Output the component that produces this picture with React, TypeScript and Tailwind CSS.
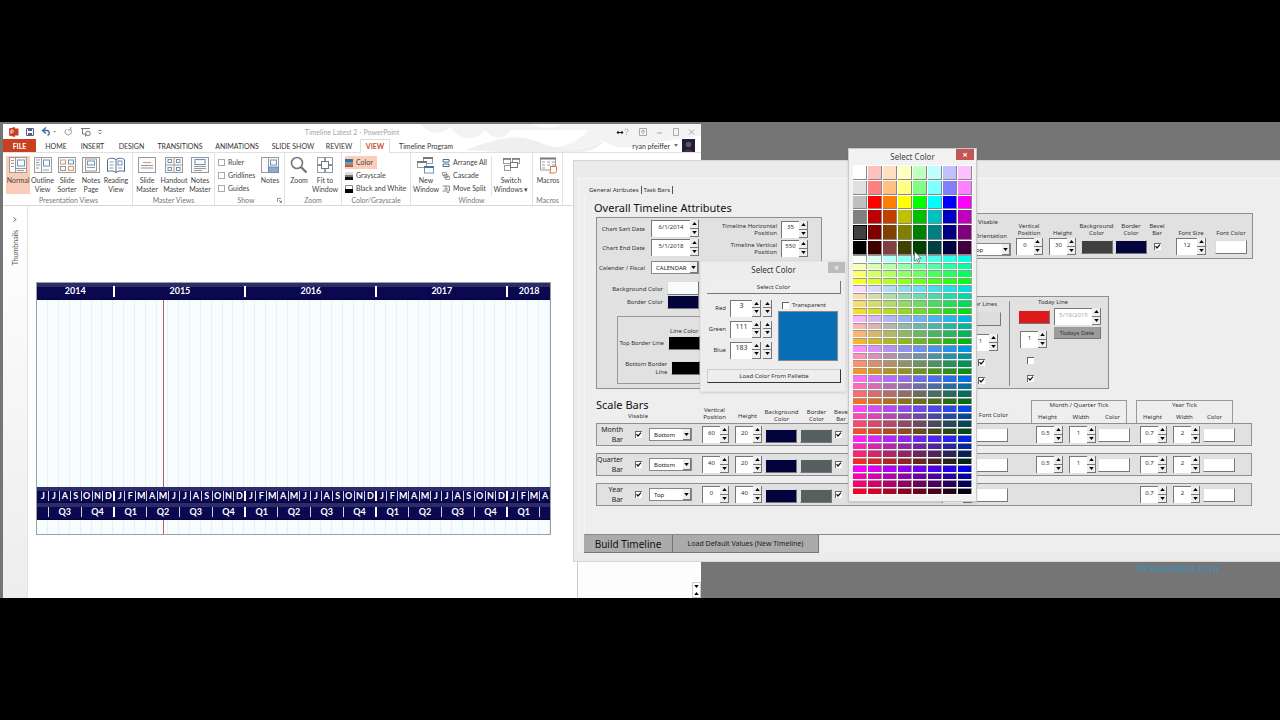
import type { ReactNode } from "react";
import clsx from "clsx";

const YEARS = [
  { label: "2014", span: "col-span-7" },
  { label: "2015", span: "col-span-12" },
  { label: "2016", span: "col-span-12" },
  { label: "2017", span: "col-span-12" },
  { label: "2018", span: "col-span-4" },
];
const MONTHS = "JJASOND" + "JFMAMJJASOND".repeat(3) + "JFMA";
const QUARTERS = ["", "Q3", "Q4", "Q1", "Q2", "Q3", "Q4", "Q1", "Q2", "Q3", "Q4", "Q1", "Q2", "Q3", "Q4", "Q1", ""];

const BASIC_COLORS = [
  "#ffffff #ffc0c0 #ffe0c0 #ffffc0 #c0ffc0 #c0ffff #c0c0ff #ffc0ff",
  "#e0e0e0 #ff8080 #ffc080 #ffff80 #80ff80 #80ffff #8080ff #ff80ff",
  "#c0c0c0 #ff0000 #ff8000 #ffff00 #00ff00 #00ffff #0000ff #ff00ff",
  "#808080 #c00000 #c04000 #c0c000 #00c000 #00c0c0 #0000c0 #c000c0",
  "#404040 #800000 #804000 #808000 #008000 #008080 #000080 #800080",
  "#000000 #400000 #804040 #404000 #004000 #004040 #000040 #400040",
].flatMap((row) => row.split(" "));

// 8 green levels x 4 blue levels down, 8 red levels across
const MIXED_COLORS = Array.from({ length: 256 }, (_, i) => {
  const row = Math.floor(i / 8);
  const r = Math.round(250 - (i % 8) * 35);
  const g = Math.round(255 - Math.floor(row / 4) * 36.4);
  const b = 250 - (row % 4) * 70;
  return `rgb(${Math.max(r, 0)}, ${Math.max(g, 0)}, ${b - (i % 8) * 3})`;
});

/* ---------- form controls ---------- */

function Arrow({ up = false }: { up?: boolean }) {
  return (
    <svg viewBox="0 0 6 4" className="h-[3px] w-[5px]" aria-hidden="true">
      <path d={up ? "M3 0 6 4H0z" : "M0 0h6L3 4z"} fill="#000" />
    </svg>
  );
}

function SpinButtons({ name }: { name: string }) {
  const cls =
    "flex flex-1 items-center justify-center border-r border-b border-[#777] bg-[#eee]";
  return (
    <span className="flex w-[9px] shrink-0 flex-col">
      <button type="button" aria-label={`${name} up`} className={cls}>
        <Arrow up />
      </button>
      <button type="button" aria-label={`${name} down`} className={cls}>
        <Arrow />
      </button>
    </span>
  );
}

function Spin({
  name,
  id,
  value,
  width = "w-[27px]",
  tone = "text-[#333]",
  big = false,
}: {
  name: string;
  id?: string;
  value: string;
  width?: string;
  tone?: string;
  big?: boolean;
}) {
  return (
    <span className={clsx("flex h-[17px]", width)}>
      <input
        id={id}
        aria-label={id ? undefined : name}
        defaultValue={value}
        className={clsx(
          "min-w-0 flex-1 border-t border-l border-[#777] bg-white pb-[5px] text-center",
          big ? "text-[7px]" : "text-[6px]",
          tone,
        )}
      />
      <SpinButtons name={name} />
    </span>
  );
}

function Combo({ name, id, value, width }: { name: string; id?: string; value: string; width: string }) {
  return (
    <span className={clsx("grid h-[13px] items-center", width)}>
      <select
        id={id}
        aria-label={id ? undefined : name}
        className="col-start-1 row-start-1 h-full w-full appearance-none border border-[#888] bg-white pl-1 text-[6px] leading-[10px] text-[#222]"
      >
        <option>{value}</option>
      </select>
      <span className="pointer-events-none col-start-1 row-start-1 mr-px flex h-[11px] w-2 items-center justify-center justify-self-end border-r border-b border-[#777] bg-[#eee]">
        <Arrow />
      </span>
    </span>
  );
}

function Check({ name, id, checked = false }: { name: string; id?: string; checked?: boolean }) {
  return (
    <span className="grid size-[7px] place-items-center">
      <input
        type="checkbox"
        id={id}
        aria-label={id ? undefined : name}
        defaultChecked={checked}
        className="peer col-start-1 row-start-1 size-[7px] appearance-none border-t border-l border-[#666] bg-white"
      />
      <svg
        viewBox="0 0 7 7"
        className="pointer-events-none col-start-1 row-start-1 hidden size-[7px] peer-checked:block"
        aria-hidden="true"
      >
        <path d="M1.5 3.2 3 5 6 1.6" fill="none" stroke="#111" strokeWidth="1.2" />
      </svg>
    </span>
  );
}

function Swatch({ name, color, width = "w-8" }: { name: string; color: string; width?: string }) {
  return (
    <button
      type="button"
      aria-label={name}
      className={clsx("block h-[14px] border-t border-l border-r border-b border-t-[#ddd] border-l-[#ddd] border-r-[#777] border-b-[#777]", width, color)}
    />
  );
}

function Stack({ label, width, children }: { label: string; width: string; children: ReactNode }) {
  return (
    <div className={clsx("flex shrink-0 flex-col items-center justify-end text-center", width)}>
      <span className="leading-[7px]">{label}</span>
      <div className="flex h-[19px] items-center">{children}</div>
    </div>
  );
}

/* ---------- PowerPoint window ---------- */

function PageIcon({ kind }: { kind: string }) {
  return (
    <svg viewBox="0 0 20 18" className="h-[18px] w-5" fill="none" stroke="#9a9a9a" aria-hidden="true">
      {kind !== "zoom" && kind !== "windows" && kind !== "switch" && kind !== "fit" && kind !== "reading" && kind !== "macros" && (
        <rect x="1.5" y="1.5" width="17" height="15" fill="#fafafa" />
      )}
      {kind === "normal" && (
        <>
          <path d="M7.500 1.500v15M7.500 12.500h11M3 4.500h3M3 7.500h3M3 10.500h3M9 14.500h7" />
          <rect x="9.500" y="4" width="7" height="6" stroke="#6f93b8" />
        </>
      )}
      {kind === "outline" && (
        <>
          <path d="M8.500 1.500v15M3 4h4M3 6.500h3M3 9h4M3 12h3M10 14h6" />
          <rect x="10.500" y="4" width="6" height="6" stroke="#6f93b8" />
        </>
      )}
      {kind === "sorter" && (
        <>
          <rect x="3.500" y="4" width="5" height="4" stroke="#d69a75" />
          <rect x="11.500" y="4" width="5" height="4" stroke="#6f93b8" />
          <rect x="3.500" y="10.500" width="5" height="4" />
          <rect x="11.500" y="10.500" width="5" height="4" stroke="#d69a75" />
        </>
      )}
      {kind === "notes" && (
        <>
          <rect x="4.500" y="3" width="11" height="12" />
          <rect x="6.500" y="5" width="7" height="4" stroke="#6f93b8" />
          <path d="M6 11.500h8" />
        </>
      )}
      {kind === "reading" && (
        <>
          <path d="M1.500 3.500c3-2 6-1.500 8.500 0 2.500-1.500 5.500-2 8.500 0v12c-3-1-6-1-8.500 1-2.500-2-5.500-2-8.500-1z" fill="#fff" stroke="#4d7093" />
          <path d="M10 3.500v13" stroke="#4d7093" />
          <path d="M3.500 6h4M3.500 9h4M3.500 12h4M12 12h4" />
          <rect x="12" y="5" width="4" height="4" stroke="#6f93b8" />
        </>
      )}
      {kind === "slideMaster" && (
        <>
          <path d="M6 6.500h8" stroke="#d69a75" />
          <path d="M4 9.500h12M4 12h12" />
        </>
      )}
      {kind === "handout" && (
        <>
          <path d="M10 1.500v15M1.500 9h17" />
          <rect x="4" y="3.500" width="3.500" height="3" stroke="#6f93b8" />
          <rect x="12.500" y="3.500" width="3.500" height="3" stroke="#6f93b8" />
          <rect x="4" y="11.500" width="3.500" height="3" stroke="#6f93b8" />
          <rect x="12.500" y="11.500" width="3.500" height="3" stroke="#6f93b8" />
        </>
      )}
      {kind === "notesMaster" && (
        <>
          <rect x="5" y="3.500" width="10" height="5" stroke="#6f93b8" />
          <path d="M4 10.500h12M4 12.500h12M4 14.500h8" />
        </>
      )}
      {kind === "notesPane" && (
        <>
          <path d="M8.500 1.500v15" />
          <rect x="10.500" y="4" width="6" height="5" stroke="#6f93b8" />
          <rect x="8.500" y="11" width="10" height="5.500" fill="#8ea9cf" stroke="#6d8bb8" />
        </>
      )}
      {kind === "zoom" && (
        <>
          <circle cx="8" cy="7" r="5.500" stroke="#777" strokeWidth="1.600" />
          <path d="m12 11 5.500 5.500" stroke="#777" strokeWidth="2.400" />
        </>
      )}
      {kind === "fit" && (
        <>
          <rect x="2.500" y="1.500" width="15" height="15" fill="#fff" />
          <rect x="6.500" y="5.500" width="7" height="7" stroke="#777" />
          <path d="M10 2v3M10 13v3M3 9h3M14 9h3" stroke="#4d7093" strokeWidth="1.400" />
        </>
      )}
      {kind === "windows" && (
        <>
          <rect x="7.500" y="1.500" width="9" height="6" fill="#fff" />
          <path d="M7 2h10" stroke="#777" strokeWidth="2" />
          <rect x="1.500" y="5.500" width="9" height="6" fill="#fff" />
          <path d="M1 6h10" stroke="#777" strokeWidth="2" />
          <rect x="8.500" y="10.500" width="9" height="6.500" fill="#fff" stroke="#6f93b8" />
          <path d="M8 11h10" stroke="#3f74b0" strokeWidth="2" />
        </>
      )}
      {kind === "switch" && (
        <>
          <rect x="2.500" y="2.500" width="7" height="5" fill="#fff" />
          <rect x="11.500" y="2.500" width="7" height="5" fill="#fff" />
          <rect x="3.500" y="9.500" width="6" height="5" fill="#fff" />
          <rect x="9.500" y="6.500" width="7" height="5" fill="#fff" stroke="#777" />
          <path d="M2 3h8M11 3h8" stroke="#777" strokeWidth="1.500" />
        </>
      )}
      {kind === "macros" && (
        <>
          <path d="M2.500 2v12h10M17.500 2v8" fill="none" />
          <path d="M2 2.500h16" stroke="#777" strokeWidth="2" />
          <path d="M4 6h3M9 6h3M14 6h3M4 9h3M9 9h3M14 9h3M4 12h3" />
          <path d="M12.500 10.500h6v4c0 2-1 2.500-2 2.500h-5c1-1 1-2 1-3z" fill="#fff" stroke="#d9703c" />
        </>
      )}
    </svg>
  );
}

function RibbonButton({
  icon,
  label,
  width,
  active = false,
}: {
  icon: string;
  label: ReactNode;
  width: string;
  active?: boolean;
}) {
  return (
    <button
      type="button"
      className={clsx(
        "flex h-[38px] shrink-0 flex-col items-center gap-0.5 text-center leading-[9px]",
        width,
        active && "bg-[#fbcdb8]",
      )}
    >
      <PageIcon kind={icon} />
      <span>{label}</span>
    </button>
  );
}

function RibbonGroup({
  title,
  width,
  launcher = false,
  children,
}: {
  title: string;
  width: string;
  launcher?: boolean;
  children: ReactNode;
}) {
  return (
    <section className={clsx("flex shrink-0 flex-col border-r border-[#e2e2e2] pt-[3px]", width)}>
      <div className="flex flex-1 px-px">{children}</div>
      <h3 className="flex h-[9px] items-center justify-center text-[7px] leading-[9px] text-[#777]">
        <span className="flex-1">{title}</span>
        {launcher && (
          <svg viewBox="0 0 5 5" className="mr-0.5 size-[5px]" fill="none" stroke="#777" aria-hidden="true">
            <path d="M.5 4V.5H4M2 2l2.500 2.500M4.500 2.500v2h-2" strokeWidth=".8" />
          </svg>
        )}
      </h3>
    </section>
  );
}

function MiniItem({ icon, label, active = false }: { icon: ReactNode; label: string; active?: boolean }) {
  return (
    <button
      type="button"
      className={clsx("flex h-[13px] items-center gap-[3px] pr-1 whitespace-nowrap", active && "bg-[#fbcdb8]")}
    >
      <svg viewBox="0 0 8 8" className="size-2" fill="none" aria-hidden="true">
        {icon}
      </svg>
      {label}
    </button>
  );
}

function TitleBar() {
  return (
    <header className="relative grid h-[15px] grid-cols-[1fr_auto_1fr] items-center px-[5px]">
      <svg viewBox="0 0 300 30" className="absolute top-0 right-0 h-[30px] w-[300px]" aria-hidden="true">
        <path
          d="M20 0c8 12 22 10 30 3 6 14 28 14 34 3 8 10 20 10 26 0h78c-8 8-20 18-44 18 24 4 46 0 58-8 8 8 26 10 40 4l58-8V0z"
          fill="#f3f3f3"
        />
        <path d="M64 26c28-10 50-18 74-8s44 10 66-2c-8 12-26 14-44 12-30 2-62 0-96-2z" fill="#efefef" />
        <path d="M130 0c10 4 18 6 32 0z" fill="#fff" />
      </svg>
      <div className="relative flex items-center">
        <svg viewBox="0 0 100 12" className="h-3 w-[100px]" fill="none" aria-hidden="true">
          <path d="M1 2.500 7 1v10L1 9.500zM7 2.500h3.500v7H7" fill="#c8401f" />
          <path d="M3 8V4h1.200a1.200 1.200 0 0 1 0 2.400H3" stroke="#fff" strokeWidth=".8" />
          <path d="M18.500 2.500h7v7h-7z" stroke="#5d5a86" />
          <path d="M20 2.500h4v2.500h-4zM20 7h4v2.500h-4z" fill="#5d5a86" />
          <path d="M35 4.500h4.500a2.500 2.500 0 0 1 0 4.800" stroke="#41719c" strokeWidth="1.400" />
          <path d="M38 1.500 34.500 4.500 38 7.500" stroke="#41719c" strokeWidth="1.400" />
          <path d="m45.500 5 1.200 1.500L48 5z" fill="#777" />
          <path d="M62.500 3.500a3.200 3.200 0 1 1-4.500 0M62.800 1v3h-3" stroke="#999" />
          <path d="M73 2.500h9M74.500 3v5h3M77.500 8v2.500" stroke="#777" />
          <circle cx="80" cy="7.500" r="2.300" stroke="#777" />
          <path d="M90.500 4.500h3M90.700 6.500 92 8l1.300-1.500" stroke="#777" />
        </svg>
      </div>
      <h1 className="relative text-[7px] leading-[10px] text-[#a6a6a6]">Timeline Latest 2 - PowerPoint</h1>
      <div className="relative flex justify-end">
        <svg viewBox="0 0 84 12" className="h-3 w-[84px]" fill="none" stroke="#aaa" aria-hidden="true">
          <path d="M5 6.500h6" stroke="#111" />
          <path d="M6.500 4.500v4l-2-2zM9.500 4.500v4l2-2z" fill="#111" stroke="none" />
          <path d="M13 4.500c0-2 3-2 3 0 0 1-1.500 1-1.500 2.500M14.500 8v1" />
          <path d="M27.500 2.500h7v7h-7zM29 6l2-2 2 2M31 4v4" />
          <path d="M45 7h5" />
          <path d="M61.500 2.500h5v7h-5z" />
          <path d="m77 3.500 5 5M82 3.500l-5 5" />
        </svg>
      </div>
    </header>
  );
}

const TABS = [
  { label: "HOME", width: "w-[40px]" },
  { label: "INSERT", width: "w-[33px]" },
  { label: "DESIGN", width: "w-[45px]" },
  { label: "TRANSITIONS", width: "w-[52px]" },
  { label: "ANIMATIONS", width: "w-[62px]" },
  { label: "SLIDE SHOW", width: "w-[50px]" },
  { label: "REVIEW", width: "w-[42px]" },
];

function TabBar() {
  return (
    <nav className="relative flex h-[14px] items-stretch border-b border-[#e0e0e0] text-[7px] leading-[14px] text-[#333]">
      <button type="button" className="w-[33px] bg-[#c8401f] font-bold text-white">
        FILE
      </button>
      {TABS.map((tab) => (
        <button key={tab.label} type="button" className={clsx("shrink-0 text-center", tab.width)}>
          {tab.label}
        </button>
      ))}
      <button type="button" className="-mb-px w-[30px] border border-b-0 border-[#ddd] bg-white leading-[13px] font-bold text-[#c8502f]">
        VIEW
      </button>
      <button type="button" className="w-[72px]">
        Timeline Program
      </button>
      <div className="ml-auto flex items-center gap-1 pr-1.5">
        <span>ryan pfeiffer</span>
        <svg viewBox="0 0 4 3" className="h-[3px] w-1" aria-hidden="true">
          <path d="M0 0h4L2 3z" fill="#777" />
        </svg>
        <svg viewBox="0 0 14 14" className="size-[13px]" aria-hidden="true">
          <path d="M0 0h14v14H0z" fill="#251c38" />
          <circle cx="7" cy="6" r="3" fill="#6b5069" />
          <path d="M2 14c1-4 9-4 10 0z" fill="#403052" />
        </svg>
      </div>
    </nav>
  );
}

function Ribbon() {
  return (
    <div className="flex h-[53px] border-b border-[#d8d8d8] bg-white text-center text-[7px] text-[#444]">
      <RibbonGroup title="Presentation Views" width="w-[130px] pl-0.5">
        <RibbonButton icon="normal" label="Normal" width="w-6" active />
        <RibbonButton icon="outline" label={<>Outline<br />View</>} width="w-[25px]" />
        <RibbonButton icon="sorter" label={<>Slide<br />Sorter</>} width="w-6" />
        <RibbonButton icon="notes" label={<>Notes<br />Page</>} width="w-6" />
        <RibbonButton icon="reading" label={<>Reading<br />View</>} width="w-[26px]" />
      </RibbonGroup>
      <RibbonGroup title="Master Views" width="w-[82px]">
        <RibbonButton icon="slideMaster" label={<>Slide<br />Master</>} width="w-[26px]" />
        <RibbonButton icon="handout" label={<>Handout<br />Master</>} width="w-7" />
        <RibbonButton icon="notesMaster" label={<>Notes<br />Master</>} width="w-6" />
      </RibbonGroup>
      <RibbonGroup title="Show" width="w-[70px]" launcher>
        <div className="flex w-[41px] shrink-0 flex-col pl-0.5">
          {["Ruler", "Gridlines", "Guides"].map((label) => (
            <label key={label} className="flex h-[13px] items-center gap-[3px]">
              <input type="checkbox" className="size-[7px] appearance-none border border-[#aaa] bg-white" />
              {label}
            </label>
          ))}
        </div>
        <RibbonButton icon="notesPane" label="Notes" width="w-[26px]" />
      </RibbonGroup>
      <RibbonGroup title="Zoom" width="w-[57px]">
        <RibbonButton icon="zoom" label="Zoom" width="w-[26px]" />
        <RibbonButton icon="fit" label={<>Fit to<br />Window</>} width="w-[26px]" />
      </RibbonGroup>
      <RibbonGroup title="Color/Grayscale" width="w-[69px]">
        <div className="flex flex-col items-start pl-0.5">
          <MiniItem
            active
            label="Color"
            icon={<><path d="M0 0h8v3H0z" fill="#3c6f9e" /><path d="M0 3h8v3H0z" fill="#7b9c96" /><path d="M0 6h8v2H0z" fill="#c25a3a" /></>}
          />
          <MiniItem
            label="Grayscale"
            icon={<><path d="M0 0h8v3H0z" fill="#ddd" /><path d="M0 3h8v2H0z" fill="#777" /><path d="M0 5h8v3H0z" fill="#111" /></>}
          />
          <MiniItem
            label="Black and White"
            icon={<><path d="M.5.500h7v7h-7z" fill="#fff" stroke="#888" /><path d="M0 4h8v4H0z" fill="#000" /></>}
          />
        </div>
      </RibbonGroup>
      <RibbonGroup title="Window" width="w-[122px]">
        <RibbonButton icon="windows" label={<>New<br />Window</>} width="w-7" />
        <div className="flex w-[52px] shrink-0 flex-col items-start border-r border-[#e2e2e2] pl-0.5">
          <MiniItem label="Arrange All" icon={<path d="M1 .5h6v2.500H1zM1 5h6v2.500H1z" stroke="#41719c" />} />
          <MiniItem label="Cascade" icon={<path d="M.5.500h4v3h-4zM2 2.500h4v3H2zM3.500 4.500h4v3h-4z" fill="#fff" stroke="#888" strokeWidth=".8" />} />
          <MiniItem label="Move Split" icon={<path d="M.5 1h7v5h-7M4 1v3M2 4h4M5 7.500h2" stroke="#888" />} />
        </div>
        <RibbonButton icon="switch" label={<>Switch<br />Windows ▾</>} width="w-[38px]" />
      </RibbonGroup>
      <RibbonGroup title="Macros" width="w-[30px]">
        <RibbonButton icon="macros" label="Macros" width="w-7" />
      </RibbonGroup>
    </div>
  );
}

function TimelineChart() {
  const bar = "grid grid-cols-47 border-t-4 border-b border-t-[#2c2c68] border-b-[#04043a] bg-[#0a0850] text-center text-white";
  return (
    <div className="relative flex h-[253px] w-[515px] flex-col border border-[#9aa0a8] bg-[#f7fcfe]">
      <div className={clsx(bar, "h-[17px] text-[9px] leading-[10px] font-bold")}>
        {YEARS.map((y, i) => (
          <span key={y.label} className={clsx("-mt-px mb-0.5 border-white", y.span, i > 0 && "border-l-2")}>
            {y.label}
          </span>
        ))}
      </div>
      <div className="grid flex-1 grid-cols-47">
        {[...MONTHS].map((_, i) => (
          <span key={i} className="border-r border-[#e9eff2]" />
        ))}
      </div>
      <div className={clsx(bar, "relative z-10 h-4 text-[9px] leading-[9px] font-bold")}>
        {[...MONTHS].map((m, i) => (
          <span
            key={i}
            className={clsx(
              "mb-px",
              [7, 19, 31, 43].includes(i) ? "border-l-2 border-white" : "border-l",
              i === 0 ? "border-transparent" : "border-[#d5d5e5]",
            )}
          >
            {m}
          </span>
        ))}
      </div>
      <div className={clsx(bar, "relative z-10 h-[17px] text-[9px] leading-[9px] font-bold")}>
        {QUARTERS.map((q, i) => (
          <span
            key={i}
            className={clsx(
              "mb-0.5",
              q ? "col-span-3" : "col-span-1",
              [3, 7, 11, 15].includes(i) ? "border-l-2 border-white" : "border-l",
              i === 0 ? "border-transparent" : "border-[#d5d5e5]",
            )}
          >
            {q}
          </span>
        ))}
      </div>
      <div className="grid h-[14px] grid-cols-47">
        {[...MONTHS].map((_, i) => (
          <span key={i} className="border-r border-[#e9eff2]" />
        ))}
      </div>
      <div className="absolute top-[17px] bottom-0 left-[24.6%] w-px bg-[#b06060]" />
    </div>
  );
}

function PowerPointWindow() {
  return (
    <section className="absolute top-[2px] bottom-0 left-[3px] flex w-[698px] flex-col bg-white font-[Lato,sans-serif]">
      <TitleBar />
      <TabBar />
      <Ribbon />
      <div className="flex min-h-0 flex-1">
        <aside className="flex w-[25px] flex-col items-center gap-2 border-r border-[#e3e3e3] bg-linear-to-b from-white to-[#ededed] pt-[11px] text-[#555]">
          <svg viewBox="0 0 4 5" className="h-[5px] w-1" fill="none" stroke="#444" aria-hidden="true">
            <path d="m.8.500 2 2-2 2" />
          </svg>
          <span className="rotate-180 text-[7px] leading-[10px] [writing-mode:vertical-rl]">Thumbnails</span>
        </aside>
        <div className="w-[550px] border-r border-[#ccc] pt-[76px] pl-2">
          <TimelineChart />
        </div>
        <div className="flex flex-1 flex-col items-end justify-end bg-[#fdfdfd]">
          <div className="flex h-4 w-[9px] flex-col items-center justify-around border border-[#ccc] bg-white">
            <Arrow />
            <Arrow up />
          </div>
        </div>
      </div>
    </section>
  );
}

/* ---------- timeline form ---------- */

const FRAME = "border border-[#8f8f8f] bg-[#e1e1e1]";

function OverallAttributes() {
  const row = "flex items-center justify-end";
  return (
    <div className="w-[226px] shrink-0">
      <h2 className="-ml-0.5 h-[19px] text-[11px] leading-5 whitespace-nowrap text-[#111]">Overall Timeline Attributes</h2>
      <div className={clsx(FRAME, "flex h-[172px] pt-px")}>
        <div className="w-[102px] shrink-0">
          <div className={clsx(row, "h-[19px] gap-1.5")}>
            <label htmlFor="start">Chart Sart Date</label>
            <Spin id="start" name="Chart start date" value="6/1/2014" width="w-[48px]" />
          </div>
          <div className={clsx(row, "h-[19px] gap-1.5")}>
            <label htmlFor="end">Chart End Date</label>
            <Spin id="end" name="Chart end date" value="5/1/2018" width="w-[48px]" />
          </div>
          <div className={clsx(row, "h-[21px] gap-1.5")}>
            <label htmlFor="calendar">Calendar / Fiscal</label>
            <Combo id="calendar" name="Calendar" value="CALENDAR" width="w-[48px]" />
          </div>
          <div className={clsx(row, "h-[17px] items-end gap-1")}>
            <span className="leading-[12px]">Background Color</span>
            <Swatch name="Background color" color="bg-[#f7fbfe]" />
          </div>
          <div className={clsx(row, "h-[14px] gap-1")}>
            <span>Border Color</span>
            <Swatch name="Border color" color="bg-[#04043c]" />
          </div>
          <div className="mt-[7px] ml-5 flex h-[68px] w-[120px] flex-col border border-[#999] pt-2.5">
            <span className="pl-[52px] leading-[8px]">Line Color</span>
            <div className="mt-px flex w-[82px] items-center justify-end gap-1">
              <span>Top Border Line</span>
              <Swatch name="Top border line color" color="bg-black" />
            </div>
            <div className="mt-2.5 flex w-[82px] items-center justify-end gap-1">
              <span className="text-right">Bottom Border Line</span>
              <Swatch name="Bottom border line color" color="bg-black" />
            </div>
          </div>
        </div>
        <div className="flex w-[109px] flex-col pt-px leading-[7px]">
          <div className={clsx(row, "h-[19px] gap-1")}>
            <label htmlFor="hpos" className="w-[64px] text-right">Timeline Horizontal Position</label>
            <Spin id="hpos" name="Timeline horizontal position" value="35" />
          </div>
          <div className={clsx(row, "h-[19px] gap-1")}>
            <label htmlFor="vpos" className="w-[54px] text-right">Timeline Vertical Position</label>
            <Spin id="vpos" name="Timeline vertical position" value="550" />
          </div>
        </div>
      </div>
    </div>
  );
}

function TitleBarFrame() {
  return (
    <div className={clsx(FRAME, "flex h-[46px] w-[405px] items-end pb-0.5 pl-[119px]")}>
      <div className="flex w-[43px] shrink-0 flex-col items-end gap-[3px]">
        <span className="mr-[13px] mb-1 leading-[7px]">Visable</span>
        <label htmlFor="orientation" className="mr-1 leading-[7px]">Orientation</label>
        <Combo id="orientation" name="Orientation" value="Top" width="w-[43px]" />
      </div>
      <Stack label="Vertical Position" width="w-[36px]">
        <Spin name="Vertical position" value="0" />
      </Stack>
      <Stack label="Height" width="w-[31px]">
        <Spin name="Height" value="30" />
      </Stack>
      <Stack label="Background Color" width="w-[37px]">
        <Swatch name="Background color" color="bg-[#404040]" />
      </Stack>
      <Stack label="Border Color" width="w-[32px]">
        <Swatch name="Border color" color="bg-[#04043c]" />
      </Stack>
      <Stack label="Bevel Bar" width="w-[20px]">
        <Check name="Bevel bar" checked />
      </Stack>
      <Stack label="Font Size" width="w-[48px]">
        <Spin name="Font size" value="12" width="w-[30px]" />
      </Stack>
      <Stack label="Font Color" width="w-[32px]">
        <Swatch name="Font color" color="bg-white" />
      </Stack>
    </div>
  );
}

function LinesFrame() {
  return (
    <div className={clsx(FRAME, "mt-[37px] flex h-[93px] w-[261px] pt-0.5 pl-[112px]")}>
      <div className="my-0.5 flex w-[49px] shrink-0 flex-col items-end border-r border-[#888] pr-2">
        <span className="mr-1 leading-[7px] whitespace-nowrap">Quarter Lines</span>
        <div className="mt-0.5 flex h-[18px] items-center">
          <Swatch name="Quarter line color" color="bg-[#dcdcdc]" />
        </div>
        <div className="mt-1.5 mr-[3px]">
          <Spin name="Quarter line weight" value="1" />
        </div>
        <div className="mt-2 mr-4 flex flex-col gap-[11px]">
          <Check name="Quarter line dashed" checked />
          <Check name="Quarter line visible" checked />
        </div>
      </div>
      <div className="flex flex-1 flex-col">
        <span className="-ml-3 text-center leading-[7px]">Today Line</span>
        <div className="mt-0.5 grid grid-cols-[36px_47px] items-center pl-2">
          <Swatch name="Today line color" color="bg-[#dd1a1a]" />
          <Spin name="Today date" value="5/19/2015" width="w-[47px]" tone="text-[#aaa]" />
          <span className="mt-1.5 pl-0.5">
            <Spin name="Today line weight" value="1" />
          </span>
          <button type="button" className="mt-0.5 h-3 self-start border-r border-b border-[#777] bg-[#9c9c9c] text-[6px] leading-[10px] whitespace-nowrap text-[#333]">
            Todays Date
          </button>
        </div>
        <div className="mt-[9px] ml-[17px] flex flex-col gap-[11px]">
          <Check name="Today line dashed" />
          <Check name="Today line visible" checked />
        </div>
      </div>
    </div>
  );
}

const SCALE_GRID =
  "grid grid-cols-[30px_22px_50px_33px_33px_35px_35px_14px_127px_37px_19px_35px_31px_39px_33px_33px_36px_14px]";

const SCALE_ROWS = [
  { name: "Month Bar", pos: "Bottom", vertical: "60", height: "20", tick: true },
  { name: "Quarter Bar", pos: "Bottom", vertical: "40", height: "20", tick: true },
  { name: "Year Bar", pos: "Top", vertical: "0", height: "40", tick: false },
];

function ScaleBars() {
  return (
    <div className="w-[656px]">
      <div className={clsx(SCALE_GRID, "h-[26px] items-end text-center leading-[7px]")}>
        <div className="col-span-3 pb-1 text-left">
          <h2 className="text-[11px] leading-4 text-[#111]">Scale Bars</h2>
          <span className="ml-8 block leading-[6px]">Visable</span>
        </div>
        <span className="pb-0.5">Vertical Position</span>
        <span className="pb-[3px]">Height</span>
        <span>Background Color</span>
        <span className="px-1">Border Color</span>
        <span>Bevel Bar</span>
        <span />
        <span className="pb-1">Font Color</span>
        <span />
        <div className="col-span-3 mr-[9px] border border-b-0 border-[#999] pt-px">
          <div className="pb-[5px]">Month / Quarter Tick</div>
          <div className="flex justify-between pr-1.5 pb-0.5 pl-1.5">
            <span>Height</span>
            <span>Width</span>
            <span>Color</span>
          </div>
        </div>
        <div className="col-span-3 mr-[5px] border border-b-0 border-[#999] pt-px">
          <div className="pb-[5px]">Year Tick</div>
          <div className="flex justify-between pr-2.5 pb-0.5 pl-1.5">
            <span>Height</span>
            <span>Width</span>
            <span>Color</span>
          </div>
        </div>
      </div>
      <div className="flex flex-col gap-[7px]">
        {SCALE_ROWS.map((r) => (
          <div key={r.name} className={clsx(SCALE_GRID, FRAME, "h-[23px] items-center [&>span]:justify-self-center")}>
            <div className="pr-1 text-right text-[7px] leading-[10px] text-[#222]">{r.name}</div>
            <span>
              <Check name={`${r.name} visible`} checked />
            </span>
            <div>
              <Combo name={`${r.name} position`} value={r.pos} width="w-[43px]" />
            </div>
            <span>
              <Spin name={`${r.name} vertical position`} value={r.vertical} />
            </span>
            <span>
              <Spin name={`${r.name} height`} value={r.height} />
            </span>
            <div className="pt-[3px]">
              <Swatch name={`${r.name} background color`} color="bg-[#04043c]" />
            </div>
            <div className="pt-[3px]">
              <Swatch name={`${r.name} border color`} color="bg-[#566060]" />
            </div>
            <div>
              <Check name={`${r.name} bevel`} checked />
            </div>
            <div className="flex justify-end pr-1">
              <Spin name={`${r.name} font size`} value="12" width="w-[30px]" />
            </div>
            <div>
              <Swatch name={`${r.name} font color`} color="bg-white" />
            </div>
            <i />
            {r.tick ? (
              <>
                <span>
                  <Spin name={`${r.name} tick height`} value="0.5" />
                </span>
                <span>
                  <Spin name={`${r.name} tick width`} value="1" />
                </span>
                <div>
                  <Swatch name={`${r.name} tick color`} color="bg-white" />
                </div>
              </>
            ) : (
              <i className="col-span-3" />
            )}
            <span>
              <Spin name={`${r.name} year tick height`} value="0.7" />
            </span>
            <span>
              <Spin name={`${r.name} year tick width`} value="2" />
            </span>
            <div>
              <Swatch name={`${r.name} year tick color`} color="bg-white" />
            </div>
          </div>
        ))}
      </div>
    </div>
  );
}

function TimelineForm() {
  return (
    <section className="absolute top-[38px] right-0 left-[573px] overflow-hidden border-t border-b border-l border-[#d5d5d5] bg-[#ebebeb] pt-[17px] pb-2 pl-1 font-['Noto_Sans',sans-serif] text-[6px] leading-[8px] text-[#333]">
      <div className="border-t border-l border-[#f7f7f7] bg-[#eeeeee] pt-[5px] pl-[5px]">
        <nav className="flex h-3 items-center gap-0.5 pl-[5px]">
          <button type="button" className="border-r border-[#555] pr-0.5">General Atributes</button>
          <button type="button" className="border-r border-[#555] pr-0.5">Task Bars</button>
        </nav>
        <div className="border-l border-[#f7f7f7] pt-0.5 pl-[11px]">
          <div className="flex">
            <OverallAttributes />
            <div className="ml-[26px] pt-[15px]">
              <TitleBarFrame />
              <LinesFrame />
            </div>
          </div>
          <div className="pt-2 pb-[28px]">
            <ScaleBars />
          </div>
        </div>
        <footer className="flex h-[19px] items-start border-t border-[#888]">
          <button type="button" className="h-[18px] w-[89px] border-r border-b border-[#777] bg-[#ababab] text-[10px] leading-4 text-[#111]">
            Build Timeline
          </button>
          <button type="button" className="h-[18px] w-[146px] border-r border-b border-[#777] bg-[#ababab] text-[7px] leading-4 text-[#222]">
            Load Default Values (New Timeline)
          </button>
        </footer>
      </div>
    </section>
  );
}

/* ---------- colour dialogs ---------- */

function RgbDialog() {
  return (
    <section className="absolute top-[139px] left-[700px] w-[146px] border border-[#e4e4e4] bg-[#ededed] pb-2 font-['Noto_Sans',sans-serif] text-[7px] leading-[10px] text-[#333] shadow-sm">
      <header className="flex h-4 items-start">
        <h2 className="flex-1 pl-[18px] text-center text-[8px] leading-4">Select Color</h2>
        <button type="button" aria-label="Close" className="flex h-[11px] w-[17px] items-center justify-center bg-[#bcbcbc] text-[8px] text-white">
          ×
        </button>
      </header>
      <div className="flex flex-col pt-[3px] pr-1 pl-1.5">
        <button type="button" className="h-[13px] border-r border-b border-[#777] bg-[#eee] text-[6px]">
          Select Color
        </button>
        <div className="flex justify-between pt-[5px]">
          <div className="flex flex-col gap-[3px]">
            {[
              ["Red", "3"],
              ["Green", "111"],
              ["Blue", "183"],
            ].map(([name, value]) => (
              <div key={name} className="flex h-[18px] items-center">
                <label htmlFor={name} className="w-[23px] pr-1 text-right text-[6px]">
                  {name}
                </label>
                <Spin id={name} name={name} value={value} width="w-[31px]" big />
                <span className="ml-0.5 flex h-[17px]">
                  <SpinButtons name={`${name} by ten`} />
                </span>
              </div>
            ))}
          </div>
          <div className="flex flex-col pr-[3px]">
            <div className="flex h-3 items-center gap-[3px] pl-1">
              <Check id="transparent" name="Transparent" />
              <label htmlFor="transparent" className="text-[6px]">Transparent</label>
            </div>
            <div className="h-[50px] w-[60px] border border-[#888] bg-[#086fb7]" />
          </div>
        </div>
        <button type="button" className="mt-2 h-[14px] border border-t-[#ccc] border-r-[#333] border-b-[#333] border-l-[#ccc] bg-[#eee] text-[6px]">
          Load Color From Pallette
        </button>
      </div>
    </section>
  );
}

function PaletteDialog() {
  return (
    <section className="absolute top-[26px] left-[848px] h-[354px] w-[129px] border border-[#c8c8c8] bg-[#f2f2f2] font-['Noto_Sans',sans-serif] shadow-sm">
      <header className="flex h-4 items-start">
        <h2 className="flex-1 pl-[20px] text-center text-[8px] leading-4 text-[#444]">Select Color</h2>
        <button type="button" aria-label="Close" className="mr-0.5 flex h-[11px] w-[18px] items-center justify-center bg-[#c35656] text-[9px] font-bold text-white">
          ×
        </button>
      </header>
      <div className="mx-1 grid h-[90px] w-[120px] grid-cols-8 bg-white">
        {BASIC_COLORS.map((c) => (
          <button
            key={c}
            type="button"
            aria-label={c}
            className={clsx("mt-px mr-px border-r border-b", c === "#404040" ? "border border-black" : "border-[#888]")}
            style={{ backgroundColor: c }}
          />
        ))}
      </div>
      <div className="mx-1 grid h-[240px] w-[120px] grid-cols-8 grid-rows-32 bg-white">
        {MIXED_COLORS.map((c, i) => (
          <button
            key={i}
            type="button"
            aria-label={c}
            className="mr-px mb-px border-t border-r border-[#999]"
            style={{ backgroundColor: c }}
          />
        ))}
      </div>
    </section>
  );
}

export default function App() {
  return (
    <main className="flex min-h-screen flex-col justify-center bg-black">
      <div className="relative h-[476px] w-full overflow-hidden bg-[#757575]">
        <PowerPointWindow />
        <TimelineForm />
        <RgbDialog />
        <PaletteDialog />
        <svg viewBox="0 0 8 12" className="absolute top-[129px] left-[914px] h-3 w-2" aria-hidden="true">
          <path d="M.5.500v9.500l2.200-2 1.500 3.500 1.500-.7-1.500-3.300h3z" fill="#fff" stroke="#555" strokeWidth=".7" />
        </svg>
        <a href="#" className="absolute top-[440px] left-[1137px] font-['Noto_Sans',sans-serif] text-[10px] leading-3 text-[#3f8fc0]">
          freescorders.com
        </a>
      </div>
    </main>
  );
}
